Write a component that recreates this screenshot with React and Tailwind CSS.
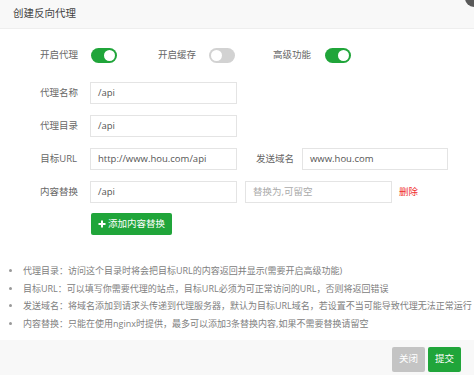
import React from "react";

const FONT = { fontFamily: '"Open Sans", "Noto Sans CJK SC", sans-serif' };

function Toggle({ on }) {
  return (
    <div
      className={
        "relative w-[26px] h-[15px] rounded-full flex items-center px-[2px] " +
        (on ? "bg-[#20a53a] justify-end" : "bg-[#d2d2d2] justify-start")
      }
    >
      <div className="w-[11px] h-[11px] rounded-full bg-white" />
    </div>
  );
}

function Input({ value, placeholder, w }) {
  return (
    <div
      className={
        "h-[22px] border border-[#e4e4e4] bg-white flex items-center pl-[7px] text-[9.5px] " +
        w +
        (value ? " text-[#555]" : " text-[#aaa]")
      }
    >
      {value || placeholder}
    </div>
  );
}

function Label({ children }) {
  return <div className="w-[37px] text-right text-[9.5px] text-[#666] whitespace-nowrap">{children}</div>;
}

const notes = [
  "代理目录：访问这个目录时将会把目标URL的内容返回并显示(需要开启高级功能)",
  "目标URL：可以填写你需要代理的站点，目标URL必须为可正常访问的URL，否则将返回错误",
  "发送域名：将域名添加到请求头传递到代理服务器，默认为目标URL域名，若设置不当可能导致代理无法正常运行",
  "内容替换：只能在使用nginx时提供，最多可以添加3条替换内容,如果不需要替换请留空",
];

export default function App() {
  return (
    <div className="relative w-[474px] h-[375px] bg-white overflow-hidden flex flex-col" style={FONT}>
      <div className="h-[29px] shrink-0 bg-[#f8f8f8] border-b border-[#eeeeee] flex items-center pl-[13px] text-[10.5px] text-[#444]">
        创建反向代理
      </div>
      <div className="absolute -right-[9px] -top-[11px] w-[18px] h-[18px] rounded-full bg-[#5a5a5a]" />

      <div className="flex-1 flex flex-col">
        {/* toggles */}
        <div className="flex items-center pl-[40px] mt-[19px] h-[15px]">
          <div className="flex items-center gap-[14px]">
            <Label>开启代理</Label>
            <Toggle on />
          </div>
          <div className="flex items-center gap-[14px] ml-[41px]">
            <Label>开启缓存</Label>
            <Toggle />
          </div>
          <div className="flex items-center gap-[15px] ml-[38px]">
            <Label>高级功能</Label>
            <Toggle on />
          </div>
        </div>

        {/* form rows */}
        <div className="flex flex-col gap-[11px] mt-[19px] pl-[40px]">
          <div className="flex items-center">
            <Label>代理名称</Label>
            <div className="ml-[13px]">
              <Input value="/api" w="w-[147px]" />
            </div>
          </div>
          <div className="flex items-center">
            <Label>代理目录</Label>
            <div className="ml-[13px]">
              <Input value="/api" w="w-[147px]" />
            </div>
          </div>
          <div className="flex items-center">
            <Label>目标URL</Label>
            <div className="ml-[13px]">
              <Input value="http://www.hou.com/api" w="w-[147px]" />
            </div>
            <div className="ml-[19px]">
              <Label>发送域名</Label>
            </div>
            <div className="ml-[9px]">
              <Input value="www.hou.com" w="w-[146px]" />
            </div>
          </div>
          <div className="flex items-center">
            <Label>内容替换</Label>
            <div className="ml-[13px]">
              <Input value="/api" w="w-[147px]" />
            </div>
            <div className="ml-[8px]">
              <Input placeholder="替换为,可留空" w="w-[147px]" />
            </div>
            <div className="ml-[7px] text-[9.5px] text-[#f03030]">删除</div>
          </div>
        </div>

        {/* add button */}
        <div className="pl-[91px] mt-[10px]">
          <div className="w-[81px] h-[22px] bg-[#20a53a] rounded-[2px] flex items-center justify-center gap-[2px] text-white text-[9.5px]">
            <svg width="8" height="8" viewBox="0 0 8 8">
              <path d="M4 0.5V7.5M0.5 4H7.5" stroke="white" strokeWidth="2" />
            </svg>
            <span>添加内容替换</span>
          </div>
        </div>

        {/* notes */}
        <ul className="mt-[27px] flex flex-col">
          {notes.map((n) => (
            <li key={n} className="flex items-center h-[17.5px] text-[9px] text-[#808080] whitespace-nowrap">
              <span className="ml-[9px] w-[3px] h-[3px] rounded-full bg-[#999]" />
              <span className="ml-[11px]">{n}</span>
            </li>
          ))}
        </ul>
      </div>

      {/* footer */}
      <div className="h-[35px] shrink-0 bg-[#f8f8f8] flex justify-end items-start pt-[7px] pr-[13px] gap-[3px]">
        <div className="w-[33px] h-[25px] bg-[#c4c4c4] rounded-[2px] flex items-center justify-center text-white text-[9.5px]">
          关闭
        </div>
        <div className="w-[33px] h-[25px] bg-[#20a53a] rounded-[2px] flex items-center justify-center text-white text-[9.5px]">
          提交
        </div>
      </div>
    </div>
  );
}
